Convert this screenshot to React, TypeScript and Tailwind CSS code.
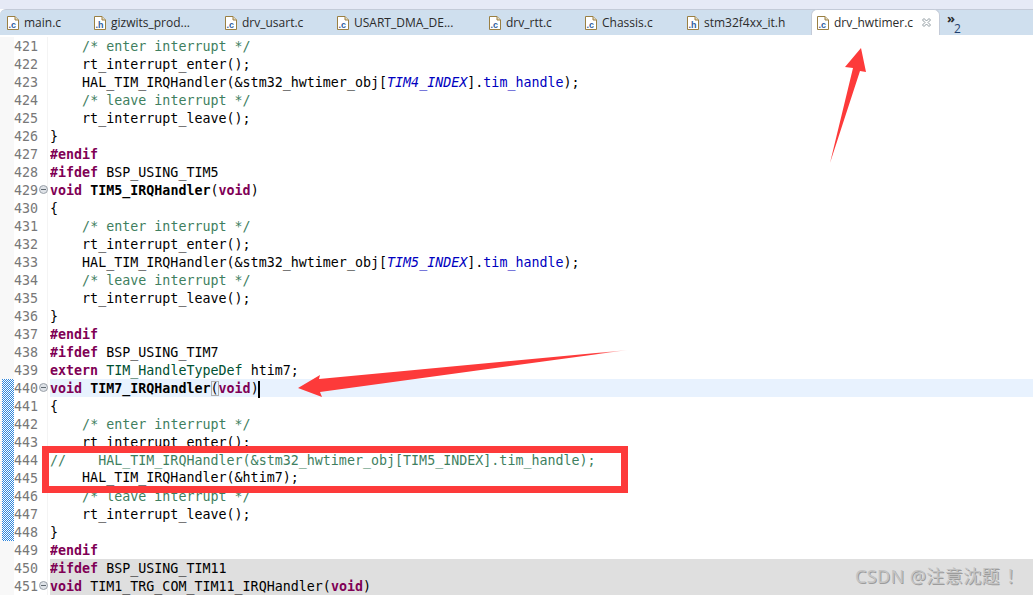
const kw = "font-bold text-[#7f0055]";
const cm = "text-[#3f7f5f]";
const mc = "italic text-[#0000c0]";
const fd = "text-[#0000c0]";
const ty = "text-[#005032]";
const fn = "font-bold";

type Seg = [string, string?];
type Line = { n: number; segs: Seg[]; fold?: boolean; changed?: boolean; current?: boolean; shade?: boolean; lift?: boolean };

const enter: Seg[] = [["    "], ["/* enter interrupt */", cm]];
const leave: Seg[] = [["    "], ["/* leave interrupt */", cm]];
const enterCall: Seg[] = [["    rt_interrupt_enter();"]];
const leaveCall: Seg[] = [["    rt_interrupt_leave();"]];
const endif: Seg[] = [["#endif", kw]];
const ifdef = (name: string): Seg[] => [["#ifdef", kw], [" " + name]];
const handler = (idx: string): Seg[] => [
  ["    HAL_TIM_IRQHandler(&stm32_hwtimer_obj["],
  [idx, mc],
  ["]."],
  ["tim_handle", fd],
  [");"],
];

const lines: Line[] = [
  { n: 421, segs: enter },
  { n: 422, segs: enterCall },
  { n: 423, segs: handler("TIM4_INDEX") },
  { n: 424, segs: leave },
  { n: 425, segs: leaveCall },
  { n: 426, segs: [["}"]] },
  { n: 427, segs: endif },
  { n: 428, segs: ifdef("BSP_USING_TIM5") },
  { n: 429, fold: true, segs: [["void", kw], [" "], ["TIM5_IRQHandler", fn], ["("], ["void", kw], [")"]] },
  { n: 430, segs: [["{"]] },
  { n: 431, segs: enter },
  { n: 432, segs: enterCall },
  { n: 433, segs: handler("TIM5_INDEX") },
  { n: 434, segs: leave },
  { n: 435, segs: leaveCall },
  { n: 436, segs: [["}"]] },
  { n: 437, segs: endif },
  { n: 438, segs: ifdef("BSP_USING_TIM7") },
  { n: 439, segs: [["extern", kw], [" "], ["TIM_HandleTypeDef", ty], [" htim7;"]] },
  { n: 440, fold: true, changed: true, current: true, segs: [] },
  { n: 441, changed: true, segs: [["{"]] },
  { n: 442, changed: true, segs: enter },
  { n: 443, changed: true, segs: enterCall },
  { n: 444, changed: true, segs: [["//    HAL_TIM_IRQHandler(&stm32_hwtimer_obj[TIM5_INDEX].tim_handle);", cm]] },
  // sits right above the red box edge, one px up keeps the underscores visible
  { n: 445, changed: true, lift: true, segs: [["    HAL_TIM_IRQHandler(&htim7);"]] },
  { n: 446, changed: true, segs: leave },
  { n: 447, changed: true, segs: leaveCall },
  { n: 448, changed: true, segs: [["}"]] },
  { n: 449, segs: endif },
  { n: 450, shade: true, segs: ifdef("BSP_USING_TIM11") },
  { n: 451, fold: true, shade: true, segs: [["void", kw], [" TIM1_TRG_COM_TIM11_IRQHandler("], ["void", kw], [")"]] },
];

const tabs = [
  { name: "main.c", ext: "c", width: "w-[87px]" },
  { name: "gizwits_prod...", ext: "h", width: "w-[131px]" },
  { name: "drv_usart.c", ext: "c", width: "w-[112px]" },
  { name: "USART_DMA_DE...", ext: "c", width: "w-[152px]" },
  { name: "drv_rtt.c", ext: "c", width: "w-[96px]" },
  { name: "Chassis.c", ext: "c", width: "w-[102px]" },
  { name: "stm32f4xx_it.h", ext: "h", width: "w-[124px]" },
];

function FileIcon({ ext }: { ext: string }) {
  return (
    <svg width="12" height="14" viewBox="0 0 12 14" className="shrink-0">
      <path d="M0.5 0.5H8L11.5 4V13.5H0.5Z" fill="#fff" stroke="#9a7f42" />
      <path d="M8 0.5V4H11.5" fill="#e6dcc0" stroke="#9a7f42" />
      <text x="1.5" y="11.5" fontSize="9" fontWeight="700" fill="#2f5f9f" fontFamily="Liberation Sans, sans-serif">
        .{ext}
      </text>
    </svg>
  );
}

function FoldIcon() {
  return (
    <svg width="9" height="9" viewBox="0 0 9 9" className="absolute left-[39px] top-[4px]">
      <circle cx="4.5" cy="4.5" r="4" fill="#dfe3e8" stroke="#9aa0a8" />
      <path d="M2 4.5H7" stroke="#5f6870" />
    </svg>
  );
}

function Tabs() {
  return (
    <div className="h-[26px] flex items-stretch bg-[#cfdfee] border-t border-[#c4cbd8] rounded-tl-[6px] pl-[7px] font-['Open_Sans',sans-serif] text-[12px] text-[#2b2b2b]">
      {tabs.map((t) => (
        <div key={t.name} className={`${t.width} flex items-center gap-[5px] whitespace-nowrap`}>
          <FileIcon ext={t.ext} />
          <span>{t.name}</span>
        </div>
      ))}
      <div className="w-[129px] flex items-center gap-[5px] bg-white rounded-t-[6px] border border-b-0 border-[#c4cbd8] pl-[5px] -mt-px whitespace-nowrap">
        <FileIcon ext="c" />
        <span>drv_hwtimer.c</span>
        <svg width="11" height="11" viewBox="0 0 11 11" className="ml-[3px]">
          <path d="M1.5 3L3 1.5 5.5 4 8 1.5 9.5 3 7 5.5 9.5 8 8 9.5 5.5 7 3 9.5 1.5 8 4 5.5Z" fill="#fff" stroke="#8f9aa0" />
        </svg>
      </div>
      <div className="ml-[7px] relative w-[16px] leading-none">
        <span className="absolute left-0 top-[2px] text-[13px] font-bold">»</span>
        <span className="absolute left-[7px] top-[13px] text-[12px] text-[#1f3f6f]">2</span>
      </div>
    </div>
  );
}

function Row({ line }: { line: Line }) {
  return (
    <div className="flex h-[18px]">
      <div className="relative w-[50px] shrink-0 bg-white">
        <div className="absolute left-0 top-0 h-full w-[14px] bg-[#f8f8f8]" />
        {line.changed && (
          <svg width="12" height="18" className="absolute left-[2px] top-0">
            <rect width="12" height="18" fill="url(#hatch)" />
          </svg>
        )}
        <div className="absolute left-[47px] top-0 h-full w-px bg-[#f4f4f4]" />
        <span className="absolute left-[14px] top-0 text-[#787878]">{line.n}</span>
        {line.fold && <FoldIcon />}
      </div>
      <div
        className={`flex-1 whitespace-pre ${line.current ? "bg-[#e8f2fe]" : ""} ${line.shade ? "bg-[#dfdfdf]" : ""} ${line.lift ? "-mt-px" : ""}`}
      >
        {line.current ? (
          <>
            <span className={kw}>void</span>
            <span> </span>
            <span className={fn}>TIM7_IRQHandler</span>
            <span className="outline outline-1 outline-[#b0b0b0] -outline-offset-1">(</span>
            <span className={kw}>void</span>
            <span>)</span>
            <span className="inline-block w-[2px] h-[17px] bg-black align-middle -ml-px" />
          </>
        ) : (
          line.segs.map((s, i) => (
            <span key={i} className={s[1]}>
              {s[0]}
            </span>
          ))
        )}
      </div>
    </div>
  );
}

export default function App() {
  return (
    <div className="relative w-[1033px] h-[595px] overflow-hidden bg-white">
      <div className="h-[9px] bg-[#e6eaf6]" />
      <Tabs />
      <div className="pt-[2px] font-['DejaVu_Sans_Mono',monospace] text-[13.33px] leading-[20px] text-black">
        {lines.map((l) => (
          <Row key={l.n} line={l} />
        ))}
      </div>

      {/* annotations drawn over the screenshot */}
      <svg className="absolute inset-0" width="1033" height="595" viewBox="0 0 1033 595">
        <defs>
          <pattern id="hatch" patternUnits="userSpaceOnUse" width="2" height="2">
            <rect width="2" height="2" fill="#ffffff" />
            <rect width="1" height="1" fill="#2f86dc" />
            <rect x="1" y="1" width="1" height="1" fill="#2f86dc" />
          </pattern>
          <linearGradient id="fade" gradientUnits="userSpaceOnUse" x1="298" y1="0" x2="628" y2="0">
            <stop offset="0.9" stopColor="#fd3a3a" />
            <stop offset="1" stopColor="#fd3a3a" stopOpacity="0.15" />
          </linearGradient>
        </defs>
        <polygon points="830,163 853,68 845,67 861,48 866,72 860,71" fill="#fd3a3a" />
        <polygon points="298,388 320,375 319,379 628,350 320,392 322,397" fill="url(#fade)" />
      </svg>
      <div className="absolute left-[42px] top-[446px] w-[586px] h-[47px] border-[7px] border-[#fd3a3a]" />
      <div className="absolute left-[855px] top-[563px] font-['Noto_Sans','Noto_Sans_CJK_SC',sans-serif] text-[18px] leading-[26px] tracking-[0.4px] whitespace-nowrap text-[#c4c4c4] [text-shadow:1px_1px_0_#9c9c9c]">
        CSDN @注意沈题<span className="ml-[6px]">！</span>
      </div>
    </div>
  );
}
